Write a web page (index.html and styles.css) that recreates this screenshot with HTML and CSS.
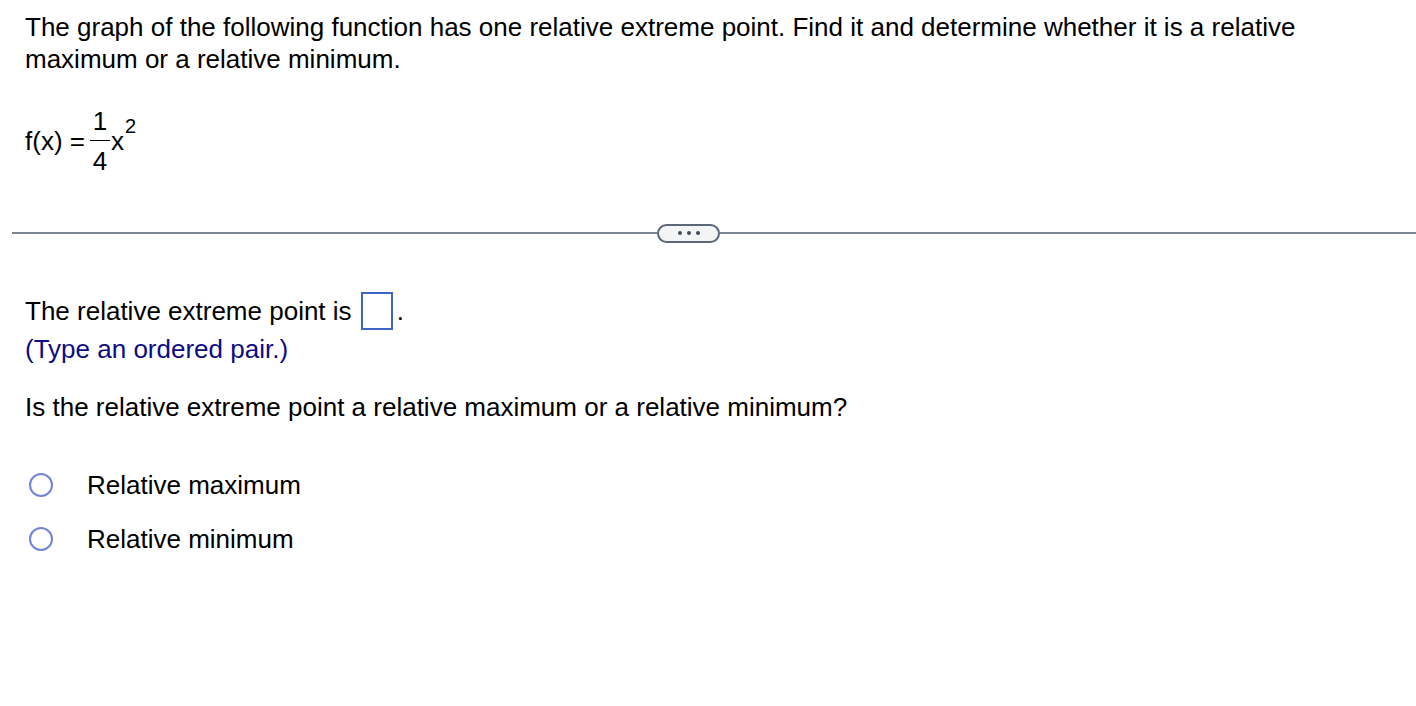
FILE: index.html
```html
<!DOCTYPE html>
<html>
<head>
<meta charset="utf-8">
<link rel="stylesheet" href="styles.css">
</head>
<body>
<div class="page">
  <div class="question">
    <p class="prompt">The graph of the following function has one relative extreme point. Find it and determine whether it is a relative maximum or a relative minimum.</p>
    <div class="formula">
      <span class="fx">f(x) =</span>
      <span class="frac"><span class="num">1</span><span class="den">4</span></span><span class="var">x</span><span class="pow">2</span>
    </div>
  </div>

  <div class="divider">
    <span class="line line-left"></span>
    <button class="more" type="button"><span class="dot"></span><span class="dot"></span><span class="dot"></span></button>
    <span class="line"></span>
  </div>

  <div class="answer">
    <p class="row">The relative extreme point is&nbsp;<span class="box"></span><span class="period">.</span></p>
    <p class="hint">(Type an ordered pair.)</p>
    <p class="ask">Is the relative extreme point a relative maximum or a relative minimum?</p>
    <ul class="options">
      <li class="option"><span class="radio"></span><span class="label">Relative maximum</span></li>
      <li class="option"><span class="radio"></span><span class="label">Relative minimum</span></li>
    </ul>
  </div>
</div>
</body>
</html>
```

FILE: styles.css
```css
html, body {
  margin: 0;
  padding: 0;
  background: #ffffff;
}
body {
  font-family: "Liberation Sans", Arial, sans-serif;
  color: #000000;
  font-size: 26px;
}
p {
  margin: 0;
}
.question {
  padding: 11px 100px 0 25px;
}
.prompt {
  line-height: 32px;
}
.formula {
  display: flex;
  align-items: center;
  margin-top: 33px;
  height: 66px;
  line-height: 26px;
}
.fx {
  white-space: pre;
  margin-right: 5px;
}
.frac {
  display: flex;
  flex-direction: column;
  align-items: center;
  width: 20px;
}
.num {
  display: block;
  width: 20px;
  text-align: center;
  padding-bottom: 6px;
  border-bottom: 1.5px solid #000;
}
.den {
  display: block;
  padding-top: 6.5px;
  line-height: 26px;
}
.var {
  margin-left: 1px;
}
.pow {
  font-size: 20px;
  line-height: 20px;
  align-self: flex-start;
  margin-top: 8px;
  margin-left: 1px;
}
.divider {
  display: flex;
  align-items: center;
  margin: 49px 0 0 12px;
  height: 20px;
}
.line {
  flex: 1;
  height: 1.5px;
  background: #7b8593;
}
.line-left {
  flex: 0 0 645px;
}
.more {
  display: flex;
  align-items: center;
  justify-content: center;
  gap: 5px;
  width: 63px;
  height: 19px;
  padding: 0;
  border: 2px solid #5c6877;
  border-radius: 10px;
  background: #f3f4f6;
}
.dot {
  width: 4px;
  height: 4px;
  border-radius: 50%;
  background: #454c56;
}
.answer {
  padding: 0 0 0 25px;
  margin-top: 49px;
}
.row {
  display: flex;
  align-items: center;
  line-height: 38px;
}
.box {
  display: inline-block;
  width: 28px;
  height: 34px;
  border: 2px solid #3f64c8;
  margin: 0 0 0 2px;
}
.period {
  margin-left: 4px;
}
.hint {
  color: #0c0c86;
  line-height: 38px;
}
.ask {
  margin-top: 20px;
  line-height: 38px;
}
.options {
  list-style: none;
  margin: 32px 0 0;
  padding: 0;
}
.option {
  display: flex;
  align-items: center;
  height: 54px;
}
.radio {
  display: inline-block;
  width: 20px;
  height: 20px;
  border: 2px solid #7384dc;
  border-radius: 50%;
  margin: 0 34px 0 4px;
}
.label {
  line-height: 30px;
}
```
